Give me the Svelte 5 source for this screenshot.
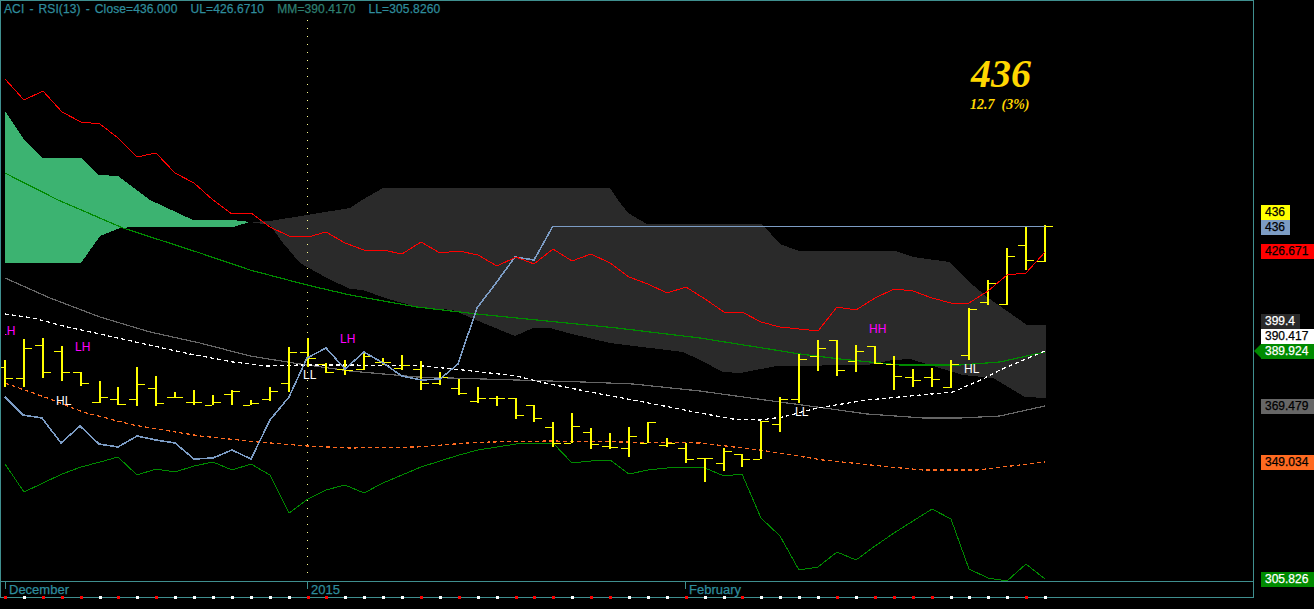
<script>
  const xOf = (i) => Math.round(5 + 18.91 * i);
  const series = (ys) => ys.map((y, i) => `${xOf(i)},${y}`).join(' ');
  const pts = (a) => a.map((p) => p.join(',')).join(' ');

  const red = series([79,100,91,112,122,124,138,157,153,173,183,200,214,213,227,236,237,232,243,250,250,254,242,253,251,255,266,257,264,249,261,254,263,277,284,293,287,299,312,312,322,327,329,331,307,310,298,289,291,298,303,303,291,275,273,252]);
  const low = series([464,492,483,474,467,462,457,475,469,472,466,462,470,464,475,513,499,490,485,493,483,475,467,461,455,450,447,444,443,443,463,461,460,474,470,468,467,468,476,474,518,536,570,567,552,560,546,533,521,509,519,569,578,581,564,579]);
  const rsi = pts([[5,397],[23,415],[42,418],[61,443],[80,426],[99,444],[118,447],[137,436],[156,440],[175,443],[194,459],[213,458],[232,450],[251,459],[270,420],[289,397],[307,358],[326,348],[345,369],[364,352],[383,363],[402,376],[421,380],[440,379],[458,364],[477,308],[496,283],[515,257],[534,260],[553,226]]);
  const green = pts([[5,173],[58,200],[123,228],[200,253],[250,270],[307,285],[350,295],[417,307],[477,314],[567,323],[617,328],[700,338],[800,354],[840,359],[900,365],[960,365],[1000,362],[1045,352]]);
  const gray = pts([[5,278],[50,298],[100,317],[150,332],[200,343],[250,356],[300,364],[350,371],[417,377],[483,379],[583,382],[633,384],[700,391],[765,400],[817,407],[867,414],[923,418],[960,418],[1000,416],[1045,406]]);
  const white = pts([[5,314],[33,318],[67,327],[100,334],[140,343],[190,354],[233,362],[267,366],[300,365],[350,365],[423,366],[463,370],[517,376],[540,382],[590,392],[633,400],[700,413],[733,419],[760,420],[783,417],[817,408],[867,400],[953,392],[983,379],[1000,370],[1045,351]]);
  const orange = pts([[5,383],[50,399],[83,412],[133,425],[200,436],[258,442],[307,446],[350,448],[417,447],[467,443],[490,442],[550,441],[700,443],[760,450],[823,460],[890,467],[923,470],[977,470],[1045,462]]);

  const greenCloud = pts([[5,111],[23,138],[42,158],[81,158],[99,175],[118,176],[150,200],[193,220],[233,220],[250,222],[233,227],[133,227],[120,228],[100,236],[81,263],[5,263]]);
  const darkCloud = pts([[250,222],[270,221],[307,215],[350,208],[362,200],[383,188],[610,188],[618,200],[628,213],[647,224],[762,224],[780,244],[799,251],[895,251],[913,257],[950,262],[967,280],[987,297],[1027,325],[1046,325],[1046,398],[1025,397],[993,378],[963,375],[910,359],[893,360],[867,365],[777,366],[740,373],[723,372],[700,360],[683,352],[610,343],[572,334],[550,328],[533,328],[515,336],[483,323],[453,310],[417,307],[385,298],[363,290],[350,289],[327,278],[300,263],[283,243],[270,225]]);

  // high, low, open, close
  const bars = [[360,387,367,378],[339,387,378,348],[338,378,345,372],[346,381,351,372],[372,386,372,383],[381,403,402,397],[387,405,399,404],[367,406,399,384],[376,406,388,403],[392,398,397,397],[390,405,402,402],[395,405,405,402],[390,405,394,391],[400,405,405,403],[387,401,399,391],[347,392,383,352],[338,367,352,358],[363,373,364,372],[360,375,369,370],[353,370,369,356],[358,365,362,362],[355,370,368,365],[361,390,369,383],[372,385,383,377],[379,395,388,393],[387,403,401,398],[396,406,398,398],[398,419,398,415],[405,422,405,418],[422,447,427,443],[413,443,443,426],[428,449,432,444],[433,449,446,447],[427,457,448,436],[422,443,443,422],[438,447,445,443],[443,463,448,459],[458,482,458,458],[448,471,463,451],[454,467,454,459],[421,459,459,421],[397,432,424,399],[354,403,399,359],[340,371,356,348],[340,376,340,370],[345,372,361,351],[346,364,346,363],[356,390,364,376],[369,387,377,380],[368,387,377,379],[360,388,387,364],[308,360,355,309],[280,305,302,283],[248,305,304,256],[227,270,245,260],[225,262,261,226]];

  const tickRed = new Set([0,2,3,4,6,8,16,17,22,24,27,28,29,31,32,36,39,44,46,47,48,49,54]);
  const ticks = Array.from({ length: 56 }, (_, i) => ({ x: xOf(i), red: tickRed.has(i) }));

  const marks = [
    { x: 5, text: 'December' },
    { x: 307, text: '2015' },
    { x: 685, text: 'February' }
  ];
  const tags = [
    { y: 205, w: 29, text: '436', bg: '#ffff00', fg: '#000' },
    { y: 220, w: 29, text: '436', bg: '#7c9cc4', fg: '#000' },
    { y: 244, w: 53, text: '426.671', bg: '#ff0000', fg: '#000' },
    { y: 314, w: 39, text: '399.4', bg: '#2a2a2a', fg: '#fff' },
    { y: 329, w: 53, text: '390.417', bg: '#ffffff', fg: '#000' },
    { y: 344, w: 53, text: '389.924', bg: '#008a00', fg: '#fff', arrow: true },
    { y: 399, w: 53, text: '369.479', bg: '#666666', fg: '#000' },
    { y: 455, w: 53, text: '349.034', bg: '#ff6a20', fg: '#000' },
    { y: 572, w: 53, text: '305.826', bg: '#008a00', fg: '#fff' }
  ];
  const pivots = [
    { x: 0, y: 335, t: 'LH', c: 'mag', clip: true },
    { x: 75, y: 351, t: 'LH', c: 'mag' },
    { x: 340, y: 343, t: 'LH', c: 'mag' },
    { x: 869, y: 333, t: 'HH', c: 'mag' },
    { x: 56, y: 405, t: 'HL', c: 'wht' },
    { x: 303, y: 379, t: 'LL', c: 'wht' },
    { x: 795, y: 416, t: 'LL', c: 'wht' },
    { x: 964, y: 373, t: 'HL', c: 'wht' }
  ];
</script>

<div class="screen">
  <section class="panel">
    <div class="legend">
      <span>ACI</span><span>-</span><span>RSI(13)</span><span>-</span><span class="val first">Close=436.000</span><span class="val">UL=426.6710</span><span class="val mm">MM=390.4170</span><span class="val">LL=305.8260</span>
    </div>
    <div class="quote">
      <div class="last">436</div>
      <div class="change">12.7  (3%)</div>
    </div>
    <svg class="plot" width="1252" height="580" viewBox="1 1 1252 580">
      <defs><clipPath id="leftclip"><rect x="5" y="0" width="1250" height="600" /></clipPath></defs>
      <polygon points={greenCloud} fill="#3cb371" />
      <polygon points={darkCloud} fill="#2a2a2a" />
      <line class="cursor" x1="307.5" y1="20" x2="307.5" y2="575" />
      <polyline class="ln thick" points={gray} stroke="#666666" />
      <polyline class="ln thick" points={green} stroke="#008a00" />
      <polyline class="ln dash" points={orange} stroke="#ff6a20" />
      <polyline class="ln dash" points={white} stroke="#ffffff" />
      <polyline class="ln" points={low} stroke="#008a00" />
      {#each bars as b, i}
        <rect x={xOf(i) - 1} y={b[0]} width="2" height={b[1] - b[0]} fill="#ffff00" />
        <rect x={xOf(i) - 8} y={b[2]} width="7" height="1" fill="#ffff00" />
        <rect x={xOf(i) + 1} y={b[3]} width="7" height="1" fill="#ffff00" />
      {/each}
      <polyline class="ln rsi" points={rsi} stroke="#7c9cc4" />
      <line class="ln" x1="553" y1="226.5" x2="1045" y2="226.5" stroke="#7c9cc4" />
      <polyline class="ln" points={red} stroke="#ff0000" />
      {#each pivots as p}
        <text class={p.c} x={p.x} y={p.y} clip-path={p.clip ? 'url(#leftclip)' : undefined}>{p.t}</text>
      {/each}
    </svg>
    <div class="timeaxis">
      {#each marks as m}
        <span class="mark" style="left: {m.x - 1}px">{m.text}</span>
      {/each}
    </div>
    {#each ticks as t}
      <i class="tick" class:red={t.red} style="left: {t.x - 2}px"></i>
    {/each}
  </section>
  <aside class="scale">
    {#each tags as t}
      <div class="tag" class:arrow={t.arrow} style="top: {t.y}px; width: {t.w}px; background: {t.bg}; color: {t.fg}">{t.text}</div>
    {/each}
  </aside>
</div>

<style>
  :global(body) { margin: 0; background: #000; }
  .screen { display: flex; width: 1314px; height: 609px; background: #000; overflow: hidden; font-family: "Liberation Sans", Arial, sans-serif; }
  .panel { position: relative; display: flex; flex-direction: column; flex: none; width: 1254px; height: 598px; box-sizing: border-box; border: 1px solid #3f8f8f; }
  .legend { position: absolute; left: 3px; top: 1px; display: flex; gap: 5px; font-size: 12px; line-height: 14px; letter-spacing: 0.12px; color: #2f8c9c; white-space: nowrap; -webkit-text-stroke: 0.25px currentColor; }
  .legend .val { margin-left: 8px; }
  .legend .first { margin-left: 0; }
  .legend .mm { color: #2e7f70; }
  .quote { position: absolute; left: 969px; top: 50px; color: #ffd700; font-family: "Liberation Serif", "Times New Roman", serif; font-style: italic; font-weight: bold; }
  .last { padding-left: 1px; font-size: 40px; line-height: 46px; }
  .change { font-size: 14px; line-height: 15px; white-space: pre; }
  .plot { display: block; flex: none; shape-rendering: crispEdges; }
  .plot text { font-size: 12px; font-family: "Liberation Sans", Arial, sans-serif; -webkit-text-stroke: 0.2px currentColor; }
  .mag { fill: #ff00ff; color: #ff00ff; }
  .wht { fill: #ffffff; color: #ffffff; }
  .ln { fill: none; stroke-width: 1; }
  .thick { stroke-width: 1.2; }
  .rsi { stroke-width: 1.6; }
  .dash { stroke-dasharray: 4 3; stroke-width: 1.2; }
  .cursor { stroke: #ffff90; stroke-width: 1; stroke-dasharray: 1 7; }
  .timeaxis { position: relative; flex: none; height: 16px; box-sizing: border-box; border-top: 1px solid #3f8f8f; }
  .mark { position: absolute; top: 0; padding-left: 3px; border-left: 1px solid #3f8f8f; height: 7px; font-size: 13px; line-height: 15px; color: #2f8c9c; white-space: nowrap; -webkit-text-stroke: 0.25px currentColor; }
  .tick { position: absolute; bottom: -2px; width: 3px; height: 3px; background: #ffffff; }
  .tick.red { background: #ff0000; }
  .scale { position: relative; flex: 1; }
  .tag { position: absolute; left: 7px; height: 15px; box-sizing: border-box; padding-left: 4px; font-size: 12px; line-height: 15px; white-space: nowrap; -webkit-text-stroke: 0.25px currentColor; }
  .tag.arrow::before { content: ""; position: absolute; left: -7px; top: 0; border-style: solid; border-width: 7.5px 7px 7.5px 0; border-color: transparent #008a00 transparent transparent; }
</style>
